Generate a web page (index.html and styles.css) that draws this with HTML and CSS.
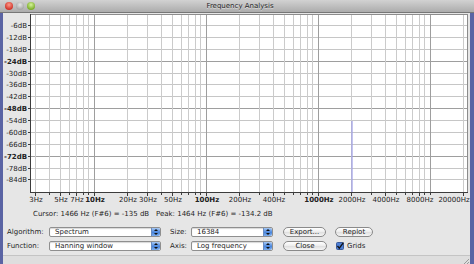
FILE: index.html
```html
<!DOCTYPE html>
<html lang="en">
<head>
  <meta charset="UTF-8">
  <title>Frequency Analysis</title>
  <link rel="stylesheet" href="styles.css">
</head>
<body>

  <div class="titlebar">
    <div class="lights">
      <span class="light red"></span>
      <span class="light gray"></span>
      <span class="light green"></span>
    </div>
    <div class="title">Frequency Analysis</div>
  </div>

  <div class="content">

    <svg class="plot" width="467" height="192" viewBox="3 13 467 192">
      <rect x="30.5" y="14.5" width="437" height="178" fill="#fff"/>

      <!-- horizontal grid -->
      <g stroke="#c6c6c6" stroke-width="1">
        <line x1="31" y1="25.5" x2="467" y2="25.5"/>
        <line x1="31" y1="37.5" x2="467" y2="37.5"/>
        <line x1="31" y1="49.5" x2="467" y2="49.5"/>
        <line x1="31" y1="73.5" x2="467" y2="73.5"/>
        <line x1="31" y1="84.5" x2="467" y2="84.5"/>
        <line x1="31" y1="96.5" x2="467" y2="96.5"/>
        <line x1="31" y1="120.5" x2="467" y2="120.5"/>
        <line x1="31" y1="132.5" x2="467" y2="132.5"/>
        <line x1="31" y1="144.5" x2="467" y2="144.5"/>
        <line x1="31" y1="168.5" x2="467" y2="168.5"/>
        <line x1="31" y1="179.5" x2="467" y2="179.5"/>
      </g>
      <g stroke="#9e9e9e" stroke-width="1">
        <line x1="31" y1="61.5" x2="467" y2="61.5"/>
        <line x1="31" y1="108.5" x2="467" y2="108.5"/>
        <line x1="31" y1="156.5" x2="467" y2="156.5"/>
      </g>

      <!-- vertical grid, log scale -->
      <g stroke="#cbcbcb" stroke-width="1">
        <line x1="35.5" y1="15" x2="35.5" y2="192"/>
        <line x1="49.5" y1="15" x2="49.5" y2="192"/>
        <line x1="60.5" y1="15" x2="60.5" y2="192"/>
        <line x1="69.5" y1="15" x2="69.5" y2="192"/>
        <line x1="76.5" y1="15" x2="76.5" y2="192"/>
        <line x1="83.5" y1="15" x2="83.5" y2="192"/>
        <line x1="88.5" y1="15" x2="88.5" y2="192"/>
        <line x1="127.5" y1="15" x2="127.5" y2="192"/>
        <line x1="147.5" y1="15" x2="147.5" y2="192"/>
        <line x1="161.5" y1="15" x2="161.5" y2="192"/>
        <line x1="172.5" y1="15" x2="172.5" y2="192"/>
        <line x1="181.5" y1="15" x2="181.5" y2="192"/>
        <line x1="188.5" y1="15" x2="188.5" y2="192"/>
        <line x1="195.5" y1="15" x2="195.5" y2="192"/>
        <line x1="200.5" y1="15" x2="200.5" y2="192"/>
        <line x1="239.5" y1="15" x2="239.5" y2="192"/>
        <line x1="259.5" y1="15" x2="259.5" y2="192"/>
        <line x1="273.5" y1="15" x2="273.5" y2="192"/>
        <line x1="284.5" y1="15" x2="284.5" y2="192"/>
        <line x1="293.5" y1="15" x2="293.5" y2="192"/>
        <line x1="300.5" y1="15" x2="300.5" y2="192"/>
        <line x1="307.5" y1="15" x2="307.5" y2="192"/>
        <line x1="312.5" y1="15" x2="312.5" y2="192"/>
        <line x1="351.5" y1="15" x2="351.5" y2="192"/>
        <line x1="371.5" y1="15" x2="371.5" y2="192"/>
        <line x1="385.5" y1="15" x2="385.5" y2="192"/>
        <line x1="396.5" y1="15" x2="396.5" y2="192"/>
        <line x1="405.5" y1="15" x2="405.5" y2="192"/>
        <line x1="412.5" y1="15" x2="412.5" y2="192"/>
        <line x1="419.5" y1="15" x2="419.5" y2="192"/>
        <line x1="424.5" y1="15" x2="424.5" y2="192"/>
        <line x1="463.5" y1="15" x2="463.5" y2="192"/>
      </g>
      <g stroke="#9e9e9e" stroke-width="1">
        <line x1="94.5" y1="15" x2="94.5" y2="192"/>
        <line x1="206.5" y1="15" x2="206.5" y2="192"/>
        <line x1="318.5" y1="15" x2="318.5" y2="192"/>
        <line x1="430.5" y1="15" x2="430.5" y2="192"/>
      </g>

      <!-- spectrum peak -->
      <line x1="352" y1="121" x2="352" y2="192" stroke="#9d9de6" stroke-width="1.2"/>

      <!-- frame and axes -->
      <g stroke="#8c8c8c" stroke-width="1" fill="none">
        <line x1="30" y1="14.5" x2="468" y2="14.5"/>
        <line x1="467.5" y1="14" x2="467.5" y2="193"/>
      </g>
      <g stroke="#3c3c3c" stroke-width="1">
        <line x1="30.5" y1="14" x2="30.5" y2="193"/>
        <line x1="30" y1="192.5" x2="468" y2="192.5"/>
      </g>

      <!-- axis ticks -->
      <g stroke="#3c3c3c" stroke-width="1">
        <line x1="28" y1="25.5" x2="30" y2="25.5"/>
        <line x1="28" y1="37.5" x2="30" y2="37.5"/>
        <line x1="28" y1="49.5" x2="30" y2="49.5"/>
        <line x1="28" y1="61.5" x2="30" y2="61.5"/>
        <line x1="28" y1="73.5" x2="30" y2="73.5"/>
        <line x1="28" y1="84.5" x2="30" y2="84.5"/>
        <line x1="28" y1="96.5" x2="30" y2="96.5"/>
        <line x1="28" y1="108.5" x2="30" y2="108.5"/>
        <line x1="28" y1="120.5" x2="30" y2="120.5"/>
        <line x1="28" y1="132.5" x2="30" y2="132.5"/>
        <line x1="28" y1="144.5" x2="30" y2="144.5"/>
        <line x1="28" y1="156.5" x2="30" y2="156.5"/>
        <line x1="28" y1="168.5" x2="30" y2="168.5"/>
        <line x1="28" y1="179.5" x2="30" y2="179.5"/>

        <line x1="35.5" y1="193" x2="35.5" y2="196"/>
        <line x1="49.5" y1="193" x2="49.5" y2="195"/>
        <line x1="60.5" y1="193" x2="60.5" y2="196"/>
        <line x1="69.5" y1="193" x2="69.5" y2="195"/>
        <line x1="76.5" y1="193" x2="76.5" y2="196"/>
        <line x1="83.5" y1="193" x2="83.5" y2="195"/>
        <line x1="88.5" y1="193" x2="88.5" y2="195"/>
        <line x1="94.5" y1="193" x2="94.5" y2="196"/>
        <line x1="127.5" y1="193" x2="127.5" y2="196"/>
        <line x1="147.5" y1="193" x2="147.5" y2="196"/>
        <line x1="161.5" y1="193" x2="161.5" y2="195"/>
        <line x1="172.5" y1="193" x2="172.5" y2="196"/>
        <line x1="181.5" y1="193" x2="181.5" y2="195"/>
        <line x1="188.5" y1="193" x2="188.5" y2="195"/>
        <line x1="195.5" y1="193" x2="195.5" y2="195"/>
        <line x1="200.5" y1="193" x2="200.5" y2="195"/>
        <line x1="206.5" y1="193" x2="206.5" y2="196"/>
        <line x1="239.5" y1="193" x2="239.5" y2="196"/>
        <line x1="259.5" y1="193" x2="259.5" y2="195"/>
        <line x1="273.5" y1="193" x2="273.5" y2="196"/>
        <line x1="284.5" y1="193" x2="284.5" y2="195"/>
        <line x1="293.5" y1="193" x2="293.5" y2="195"/>
        <line x1="300.5" y1="193" x2="300.5" y2="195"/>
        <line x1="307.5" y1="193" x2="307.5" y2="195"/>
        <line x1="312.5" y1="193" x2="312.5" y2="195"/>
        <line x1="318.5" y1="193" x2="318.5" y2="196"/>
        <line x1="351.5" y1="193" x2="351.5" y2="196"/>
        <line x1="371.5" y1="193" x2="371.5" y2="195"/>
        <line x1="385.5" y1="193" x2="385.5" y2="196"/>
        <line x1="396.5" y1="193" x2="396.5" y2="195"/>
        <line x1="405.5" y1="193" x2="405.5" y2="195"/>
        <line x1="412.5" y1="193" x2="412.5" y2="195"/>
        <line x1="419.5" y1="193" x2="419.5" y2="196"/>
        <line x1="424.5" y1="193" x2="424.5" y2="195"/>
        <line x1="430.5" y1="193" x2="430.5" y2="195"/>
        <line x1="463.5" y1="193" x2="463.5" y2="196"/>
      </g>

      <!-- dB labels -->
      <g class="ylabels" text-anchor="end">
        <text x="27" y="28">-6dB</text>
        <text x="27" y="40">-12dB</text>
        <text x="27" y="52">-18dB</text>
        <text x="27" y="64" class="major">-24dB</text>
        <text x="27" y="76">-30dB</text>
        <text x="27" y="87">-36dB</text>
        <text x="27" y="99">-42dB</text>
        <text x="27" y="111" class="major">-48dB</text>
        <text x="27" y="123">-54dB</text>
        <text x="27" y="135">-60dB</text>
        <text x="27" y="147">-66dB</text>
        <text x="27" y="159" class="major">-72dB</text>
        <text x="27" y="171">-78dB</text>
        <text x="27" y="182">-84dB</text>
      </g>

      <!-- Hz labels -->
      <g class="xlabels" text-anchor="middle">
        <text x="36" y="202">3Hz</text>
        <text x="61" y="202">5Hz</text>
        <text x="77" y="202">7Hz</text>
        <text x="95" y="202" class="major">10Hz</text>
        <text x="128" y="202">20Hz</text>
        <text x="148" y="202">30Hz</text>
        <text x="173" y="202">50Hz</text>
        <text x="207" y="202" class="major">100Hz</text>
        <text x="240" y="202">200Hz</text>
        <text x="274" y="202">400Hz</text>
        <text x="319" y="202" class="major">1000Hz</text>
        <text x="352" y="202">2000Hz</text>
        <text x="386" y="202">4000Hz</text>
        <text x="420" y="202">8000Hz</text>
        <text x="454" y="202">20000Hz</text>
      </g>
    </svg>

    <div class="readout">
      <span class="cursor">Cursor: 1466 Hz (F#6) = -135 dB</span>
      <span class="peak">Peak: 1464 Hz (F#6) = -134.2 dB</span>
    </div>

    <div class="controls">
      <label>Algorithm:</label>
      <div class="popup wide">Spectrum<span class="stepper"></span></div>
      <label>Size:</label>
      <div class="popup narrow">16384<span class="stepper"></span></div>
      <div class="cell"><button class="btn export">Export...</button></div>
      <div class="cell"><button class="btn replot">Replot</button></div>

      <label>Function:</label>
      <div class="popup wide">Hanning window<span class="stepper"></span></div>
      <label>Axis:</label>
      <div class="popup narrow">Log frequency<span class="stepper"></span></div>
      <div class="cell"><button class="btn close">Close</button></div>
      <div class="cell check">
        <svg width="8" height="8" viewBox="0 0 8 8">
          <rect x="0.5" y="0.5" width="7" height="7" rx="1" fill="#4d7fd6" stroke="#3a5a9a"/>
          <path d="M1.5 4 L3.3 6.2 L7.4 0.6" fill="none" stroke="#111" stroke-width="1.3"/>
        </svg>
        <span>Grids</span>
      </div>
    </div>

  </div>

  <div class="statusbar">
    <svg class="grip" width="8" height="7" viewBox="0 0 8 7">
      <g stroke="#9a9a9a" stroke-width="1">
        <line x1="2" y1="7" x2="8" y2="1"/>
        <line x1="5" y1="7" x2="8" y2="4"/>
      </g>
    </svg>
  </div>

</body>
</html>
```

FILE: styles.css
```css
body {
  margin: 0;
  width: 474px;
  height: 264px;
  overflow: hidden;
  background-color: #5a64a4;
  font-family: "DejaVu Sans", sans-serif;
  font-size: 7px;
  color: #1e1e1e;
}
.titlebar {
  height: 12px;
  border-bottom: 1px solid #777;
  background: linear-gradient(#d2d2d2, #acacac);
  display: flex;
  align-items: center;
  position: relative;
}
.lights {
  display: flex;
  gap: 3px;
  margin-left: 5px;
}
.light {
  width: 8px;
  height: 8px;
  border-radius: 50%;
}
.light.red {
  background: radial-gradient(circle at 50% 35%, #ff9a8a, #d0342a 70%);
}
.light.gray {
  background: radial-gradient(circle at 50% 35%, #e6e6e6, #a8a8a8 70%);
}
.light.green {
  background: radial-gradient(circle at 50% 35%, #d6f49a, #7cae2a 70%);
}
.title {
  position: absolute;
  left: 0;
  right: 0;
  text-align: center;
  color: #262626;
  text-shadow: 0 1px 0 #dcdcdc;
  margin-left: 6px;
}
.content {
  margin: 0 4px 0 3px;
  background-color: #e6e6e6;
  height: 242px;
  overflow: hidden;
}
.plot {
  display: block;
}
.plot text {
  font-family: "DejaVu Sans", sans-serif;
  font-size: 7px;
  fill: #222;
}
.plot text.major {
  font-weight: bold;
}
.readout {
  height: 10px;
  line-height: 10px;
  margin-top: 4px;
  position: relative;
}
.readout .cursor {
  position: absolute;
  left: 30px;
}
.readout .peak {
  position: absolute;
  left: 153px;
}
.controls {
  margin-top: 8px;
  display: grid;
  grid-template-columns: 42px 121px 21px 92px 52px auto;
  grid-auto-rows: 10px;
  row-gap: 4px;
  padding-left: 4px;
  align-items: center;
}
.controls label {
  line-height: 10px;
}
.popup {
  position: relative;
  height: 8px;
  line-height: 8px;
  background: #fff;
  border: 1px solid #8f8f8f;
  border-radius: 2px;
  padding-left: 5px;
  box-shadow: inset 0 1px 1px #d8d8d8;
}
.popup.wide {
  width: 105px;
}
.popup.narrow {
  width: 75px;
}
.stepper {
  position: absolute;
  right: 0;
  top: 0;
  width: 8px;
  height: 8px;
  background: linear-gradient(#a6c8f4, #4b86dc 55%, #7fb0ee);
  border-left: 1px solid #6a8cc0;
  border-radius: 0 2px 2px 0;
}
.stepper::before,
.stepper::after {
  content: "";
  position: absolute;
  left: 2px;
  border-left: 2px solid transparent;
  border-right: 2px solid transparent;
}
.stepper::before {
  top: 1px;
  border-bottom: 2px solid #111;
}
.stepper::after {
  bottom: 1px;
  border-top: 2px solid #111;
}
.cell {
  display: flex;
  align-items: center;
}
.btn {
  font-family: "DejaVu Sans", sans-serif;
  font-size: 7px;
  color: #1e1e1e;
  height: 10px;
  line-height: 8px;
  padding: 0;
  border: 1px solid #8a8a8a;
  border-radius: 5px;
  background: linear-gradient(#ffffff, #ececec 50%, #dedede 51%, #f6f6f6);
}
.btn.export {
  width: 43px;
}
.btn.close {
  width: 44px;
}
.btn.replot {
  width: 38px;
}
.check {
  gap: 3px;
  padding-left: 1px;
}
.check svg {
  display: block;
}
.statusbar {
  margin: 0 4px 0 3px;
  height: 9px;
  background-color: #dedede;
  border-top: 1px solid #c4c4c4;
  display: flex;
  justify-content: flex-end;
  align-items: flex-end;
}
.grip {
  display: block;
  margin-right: 1px;
}
```
